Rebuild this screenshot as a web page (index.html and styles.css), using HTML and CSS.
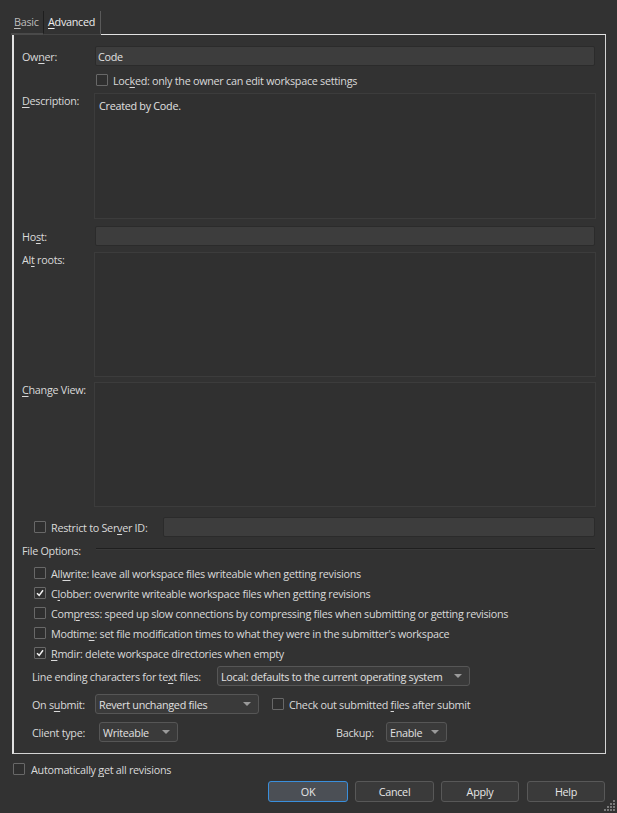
FILE: index.html
```html
<!DOCTYPE html>
<html>
<head>
<meta charset="utf-8">
<link rel="stylesheet" href="styles.css">
</head>
<body>
<div class="dialog">
  <div class="tabbar">
    <div class="tab"><u>B</u>asic</div>
    <div class="tab active"><u>A</u>dvanced</div>
    <div class="tab-fill"></div>
  </div>
  <div class="pane">
    <div class="row r-owner">
      <span class="lbl">Ow<u>n</u>er:</span>
      <div class="input">Code</div>
    </div>
    <div class="row r-locked">
      <span class="lbl"></span>
      <span class="cb"></span>
      <span class="cb-text">Loc<u>k</u>ed: only the owner can edit workspace settings</span>
    </div>
    <div class="row r-desc top">
      <span class="lbl"><u>D</u>escription:</span>
      <div class="textarea desc">Created by Code.</div>
    </div>
    <div class="row r-host">
      <span class="lbl">Ho<u>s</u>t:</span>
      <div class="input"></div>
    </div>
    <div class="row r-alt top">
      <span class="lbl">Al<u>t</u> roots:</span>
      <div class="textarea"></div>
    </div>
    <div class="row r-view top">
      <span class="lbl"><u>C</u>hange View:</span>
      <div class="textarea"></div>
    </div>
    <div class="row r-restrict">
      <span class="cb"></span>
      <span class="cb-text">Restrict to Ser<u>v</u>er ID:</span>
      <div class="input server"></div>
    </div>
    <div class="row r-fileopts">
      <span class="txt">File Options:</span>
      <span class="sep"></span>
    </div>
    <div class="opts">
      <div class="opt"><span class="cb"></span><span class="cb-text">All<u>w</u>rite: leave all workspace files writeable when getting revisions</span></div>
      <div class="opt"><span class="cb checked"><svg viewBox="0 0 12 12" width="12" height="12"><polyline points="3,6.2 5.2,8.4 9,3.2" fill="none" stroke="#f2f2f2" stroke-width="1.5"/></svg></span><span class="cb-text">C<u>l</u>obber: overwrite writeable workspace files when getting revisions</span></div>
      <div class="opt"><span class="cb"></span><span class="cb-text">Com<u>p</u>ress: speed up slow connections by compressing files when submitting or getting revisions</span></div>
      <div class="opt"><span class="cb"></span><span class="cb-text">Modtim<u>e</u>: set file modification times to what they were in the submitter's workspace</span></div>
      <div class="opt"><span class="cb checked"><svg viewBox="0 0 12 12" width="12" height="12"><polyline points="3,6.2 5.2,8.4 9,3.2" fill="none" stroke="#f2f2f2" stroke-width="1.5"/></svg></span><span class="cb-text"><u>R</u>mdir: delete workspace directories when empty</span></div>
    </div>
    <div class="row r-lineend">
      <span class="txt lbl-le">Line ending characters for te<u>x</u>t files:</span>
      <div class="combo w-le"><span class="txt">Local: defaults to the current operating system</span><span class="arrow"></span></div>
    </div>
    <div class="row r-submit">
      <span class="txt lbl-sub">On s<u>u</u>bmit:</span>
      <div class="combo w-sub"><span class="txt">Revert unchanged files</span><span class="arrow"></span></div>
      <span class="cb co-cb"></span>
      <span class="cb-text">Check out submitted <u>f</u>iles after submit</span>
    </div>
    <div class="row r-client">
      <span class="txt lbl-ct">Client type:</span>
      <div class="combo w-ct"><span class="txt">Writeable</span><span class="arrow"></span></div>
      <span class="txt lbl-bk">Backup:</span>
      <div class="combo w-bk"><span class="txt">Enable</span><span class="arrow"></span></div>
    </div>
  </div>
  <div class="auto-row">
    <span class="cb"></span>
    <span class="cb-text auto-text">Automatically <u>g</u>et all revisions</span>
  </div>
  <div class="buttons">
    <div class="btn default w-ok">OK</div>
    <div class="btn w-cancel">Cancel</div>
    <div class="btn w-apply">Apply</div>
    <div class="btn w-help">Help</div>
  </div>
  <svg class="grip" width="12" height="12" viewBox="0 0 12 12">
    <g fill="#7a7a7a">
      <rect x="9" y="0" width="2" height="2"/>
      <rect x="6" y="3" width="2" height="2"/><rect x="9" y="3" width="2" height="2"/>
      <rect x="3" y="6" width="2" height="2"/><rect x="6" y="6" width="2" height="2"/><rect x="9" y="6" width="2" height="2"/>
      <rect x="0" y="9" width="2" height="2"/><rect x="3" y="9" width="2" height="2"/><rect x="6" y="9" width="2" height="2"/><rect x="9" y="9" width="2" height="2"/>
    </g>
  </svg>
</div>
</body>
</html>
```

FILE: styles.css
```css
html, body {
  margin: 0;
  padding: 0;
  background: #323232;
}
body {
  font-family: "Open Sans", "Noto Sans", sans-serif;
  font-size: 10.8px;
  letter-spacing: -0.28px;
  color: #dadada;
}
u {
  text-decoration: underline;
  text-underline-offset: 2px;
}
.dialog {
  position: relative;
  width: 617px;
  height: 813px;
  overflow: hidden;
  background: #323232;
}

/* tabs */
.tabbar {
  display: flex;
  height: 35px;
  box-sizing: border-box;
  padding-top: 11px;
  margin-left: 11px;
  margin-right: 11px;
}
.tab {
  height: 24px;
  box-sizing: border-box;
  line-height: 22px;
  color: #bdbdbd;
  border-bottom: 2px solid #4a4a4a;
}
.tab:first-child {
  width: 33px;
  padding-left: 3px;
  border-right: 1px solid #1e1e1e;
}
.tab.active {
  width: 57px;
  padding-left: 4px;
  color: #ededed;
  border-right: 1px solid #5a5a5a;
  border-bottom: 1px solid #444;
}
.tab-fill {
  flex: 1;
  height: 24px;
  box-sizing: border-box;
  border-bottom: 1px solid #e2e2e2;
}

/* pane */
.pane {
  margin-left: 12px;
  margin-right: 11px;
  height: 719px;
  box-sizing: border-box;
  border-left: 2px solid #e2e2e2;
  border-right: 1px solid #d4d4d4;
  border-bottom: 1px solid #d4d4d4;
  padding: 11px 10px 9px 8px;
  display: flex;
  flex-direction: column;
}
.row {
  display: flex;
  align-items: center;
}
.row.top {
  align-items: flex-start;
}
.lbl {
  width: 73px;
  flex: none;
  line-height: 14px;
}
.row:not(.top) .lbl,
.txt,
.cb-text {
  padding-top: 1px;
}
.row.top .lbl {
  padding-top: 1px;
}
.input {
  flex: 1;
  height: 20px;
  box-sizing: border-box;
  background: #3d3d3d;
  border: 1px solid #2b2b2b;
  border-radius: 2px;
  padding-left: 2px;
  line-height: 18px;
  padding-top: 1px;
  color: #e0e0e0;
}
.textarea {
  flex: 1;
  margin: 0 -1px;
  box-sizing: border-box;
  background: #303030;
  border: 1px solid #3c3c3c;
  padding: 4px 4px;
  line-height: 16px;
  color: #e0e0e0;
}
.r-owner { height: 20px; }
.r-locked { margin-top: 6px; height: 16px; }
.r-locked .cb { margin-left: 1px; }
.r-desc { margin-top: 5px; }
.r-desc .textarea { height: 126px; }
.r-host { margin-top: 7px; height: 20px; }
.r-alt { margin-top: 6px; }
.r-alt .textarea { height: 125px; }
.r-view { margin-top: 5px; }
.r-view .textarea { height: 125px; }

.r-restrict {
  margin-top: 10px;
  height: 20px;
  padding-left: 12px;
}
.input.server {
  flex: none;
  width: 432px;
  margin-left: auto;
}

.r-fileopts {
  margin-top: 4px;
  height: 18px;
}
.sep {
  flex: 1;
  margin-left: 15px;
  margin-top: -3px;
  border-top: 1px solid #1f1f1f;
  border-bottom: 1px solid #393939;
}

.opts {
  margin-top: 4px;
  padding-left: 12px;
  display: flex;
  flex-direction: column;
}
.opt {
  height: 20px;
  display: flex;
  align-items: center;
}

/* checkbox */
.cb {
  flex: none;
  width: 12px;
  height: 12px;
  box-sizing: border-box;
  border: 1px solid #686868;
  background: #2f2f2f;
  border-radius: 1px;
  position: relative;
}
.cb svg {
  position: absolute;
  left: -1px;
  top: -1px;
}
.cb-text {
  margin-left: 5px;
  white-space: nowrap;
}

/* combos */
.combo {
  flex: none;
  height: 20px;
  box-sizing: border-box;
  background: #3a3a3a;
  border: 1px solid #565656;
  border-radius: 3px;
  display: flex;
  align-items: center;
  padding-left: 3px;
  padding-right: 7px;
  white-space: nowrap;
  color: #e0e0e0;
}
.arrow {
  margin-left: auto;
  width: 0;
  height: 0;
  border-left: 4px solid transparent;
  border-right: 4px solid transparent;
  border-top: 4px solid #9a9a9a;
}
.r-lineend { margin-top: 3px; height: 20px; padding-left: 10px; }
.lbl-le { width: 185px; flex: none; white-space: nowrap; }
.w-le { width: 253px; }
.r-submit { margin-top: 8px; height: 20px; padding-left: 10px; }
.lbl-sub { width: 63px; flex: none; }
.w-sub { width: 164px; }
.co-cb { margin-left: 13px; }
.r-client { margin-top: 8px; height: 20px; padding-left: 10px; }
.lbl-ct { width: 67px; flex: none; }
.w-ct { width: 79px; }
.lbl-bk { margin-left: 158px; width: 50px; flex: none; }
.w-bk { width: 61px; }

/* bottom */
.auto-row {
  margin-top: 7px;
  margin-left: 13px;
  height: 16px;
  display: flex;
  align-items: center;
}
.auto-text { margin-left: 6px; }
.buttons {
  margin-top: 4px;
  margin-right: 12px;
  display: flex;
  justify-content: flex-end;
  gap: 7px;
}
.btn {
  height: 21px;
  box-sizing: border-box;
  border: 1px solid #585858;
  border-radius: 3px;
  background: #3a3a3a;
  text-align: center;
  line-height: 20px;
  color: #e6e6e6;
}
.btn.default {
  border-color: #3a8fdc;
  background: #4b4f55;
}
.w-ok { width: 80px; }
.w-cancel { width: 79px; }
.w-apply { width: 78px; }
.w-help { width: 78px; margin-left: 1px; }
.grip {
  position: absolute;
  right: 1px;
  bottom: 1px;
}
```
